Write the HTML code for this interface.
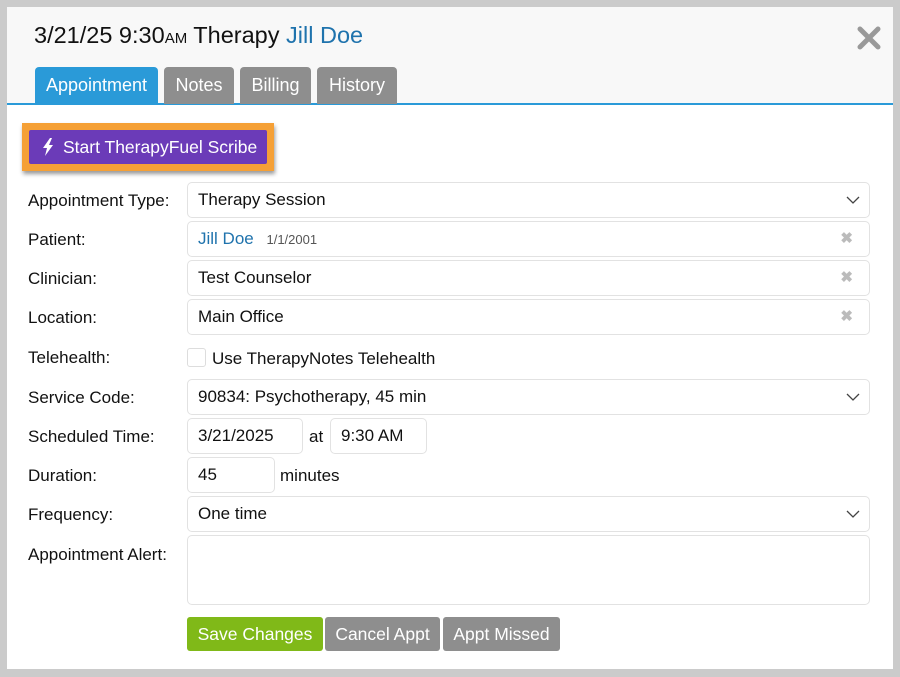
<!DOCTYPE html><html><head><style>
*{box-sizing:border-box;margin:0;padding:0}
body{width:900px;height:677px;background:#cbcbcb;font-family:"Liberation Sans",Arial,sans-serif;position:relative;overflow:hidden;color:#111}
.panel{position:absolute;left:7px;top:7px;width:886px;height:662px;background:#fff}
.head{position:absolute;left:0;top:0;width:886px;height:98px;background:#f8f8f8;border-bottom:2px solid #2a9ad8}
.title{position:absolute;left:27px;top:15px;font-size:23.5px;color:#111;white-space:nowrap}
.title .am{font-size:15px}
.title .n{color:#1f73ad}
.close{position:absolute;left:850px;top:19px}
.tab{position:absolute;top:60px;height:37px;background:#8e8e8e;color:#fff;font-size:18px;line-height:37px;text-align:center;border-radius:4px 4px 0 0}
.tab.a{background:#2a9ad8}
.scribe{position:absolute;left:15px;top:116px;width:252px;height:48px;background:#f5a036;box-shadow:1px 3px 4px rgba(0,0,0,.4)}
.scribe div{position:absolute;left:7px;top:7px;width:238px;height:34px;background:#6b3bb8;border-radius:2px;color:#fff;font-size:17.5px;line-height:34px;padding-left:34px;white-space:nowrap}
.scribe svg{position:absolute;left:12px;top:8px}
.lbl{position:absolute;left:21px;font-size:17px;color:#111}
.f{position:absolute;left:180px;width:683px;height:36px;border:1px solid #e2e2e2;border-radius:5px;font-size:17px;line-height:34px;padding-left:10px;background:#fff}
.f .x{position:absolute;right:16px;top:0;color:#bbb;font-size:15px;font-weight:bold}
.f svg{position:absolute;right:9px;top:13px}
.btn{position:absolute;top:610px;height:34px;border-radius:3px;color:#fff;font-size:17.5px;line-height:34px;text-align:center;background:#8e8e8e}
</style></head><body><div class="panel">
<div class="head">
<div class="title">3/21/25 9:30<span class="am">AM</span> Therapy <span class="n">Jill Doe</span></div>
<svg class="close" width="24" height="24" viewBox="0 0 24 24"><path d="M3 3L21 21M21 3L3 21" stroke="#999" stroke-width="5" stroke-linecap="round"/></svg>
<div class="tab a" style="left:28px;width:123px">Appointment</div>
<div class="tab" style="left:157px;width:70px">Notes</div>
<div class="tab" style="left:233px;width:71px">Billing</div>
<div class="tab" style="left:310px;width:80px">History</div>
</div>
<div class="scribe"><div><svg width="14" height="18" viewBox="0 0 14 18"><path d="M9 0L2 10H6L4 18L12 7H8L11 0Z" fill="#fff"/></svg>Start TherapyFuel Scribe</div></div>

<div class="lbl" style="top:184px">Appointment Type:</div>
<div class="f" style="top:175px">Therapy Session<svg width="14" height="8"><path d="M1 1L7 7L13 1" stroke="#444" fill="none" stroke-width="1.3"/></svg></div>
<div class="lbl" style="top:223px">Patient:</div>
<div class="f" style="top:214px"><span style="color:#1f73ad">Jill Doe</span> <span style="font-size:13px;color:#555;margin-left:8px">1/1/2001</span><span class="x">✖</span></div>
<div class="lbl" style="top:262px">Clinician:</div>
<div class="f" style="top:253px">Test Counselor<span class="x">✖</span></div>
<div class="lbl" style="top:301px">Location:</div>
<div class="f" style="top:292px">Main Office<span class="x">✖</span></div>
<div class="lbl" style="top:341px">Telehealth:</div>
<div style="position:absolute;left:180px;top:341px;width:19px;height:19px;border:1px solid #ddd;border-radius:3px"></div>
<div class="lbl" style="left:205px;top:342px">Use TherapyNotes Telehealth</div>
<div class="lbl" style="top:381px">Service Code:</div>
<div class="f" style="top:372px">90834: Psychotherapy, 45 min<svg width="14" height="8"><path d="M1 1L7 7L13 1" stroke="#444" fill="none" stroke-width="1.3"/></svg></div>
<div class="lbl" style="top:420px">Scheduled Time:</div>
<div class="f" style="top:411px;width:116px">3/21/2025</div>
<div class="lbl" style="left:302px;top:420px">at</div>
<div class="f" style="top:411px;left:323px;width:97px">9:30 AM</div>
<div class="lbl" style="top:459px">Duration:</div>
<div class="f" style="top:450px;width:88px">45</div>
<div class="lbl" style="left:273px;top:459px">minutes</div>
<div class="lbl" style="top:498px">Frequency:</div>
<div class="f" style="top:489px">One time<svg width="14" height="8"><path d="M1 1L7 7L13 1" stroke="#444" fill="none" stroke-width="1.3"/></svg></div>
<div class="lbl" style="top:538px">Appointment Alert:</div>
<div class="f" style="top:528px;height:70px"></div>
<div class="btn" style="left:180px;width:136px;background:#80b918">Save Changes</div>
<div class="btn" style="left:318px;width:115px">Cancel Appt</div>
<div class="btn" style="left:436px;width:117px">Appt Missed</div>
</div></body></html>
